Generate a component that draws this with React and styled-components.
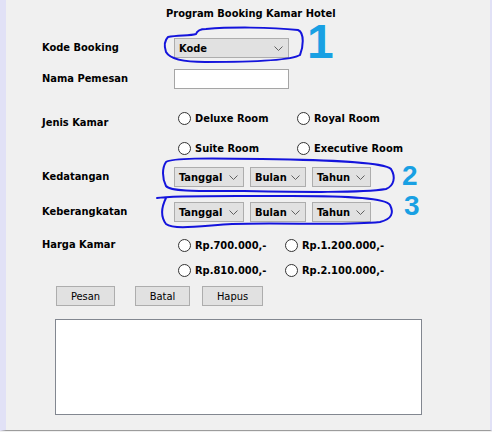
import styled, { createGlobalStyle } from "styled-components";

const GlobalStyle = createGlobalStyle`
  body {
    margin: 0;
    background: #f0f0f0;
    font-family: "DejaVu Sans Condensed", "DejaVu Sans", sans-serif;
    font-stretch: condensed;
  }
`;

const Window = styled.div`
  position: relative;
  width: 492px;
  height: 431px;
  box-sizing: border-box;
  background: #f0f0f0;
  border-left: 6px solid #e1e1f6;
  border-right: 2px solid #e1e1f6;
  border-bottom: 1px solid #9c9c9c;
`;

const Form = styled.div`
  display: flex;
  flex-direction: column;
  padding-left: 36px;
  font-size: 11px;
  font-weight: bold;
  color: #000;
`;

const Title = styled.div`
  margin-top: 7px;
  padding-left: 124px;
  line-height: 13px;
`;

const Row = styled.div`
  display: grid;
  grid-template-columns: 132px auto;
  align-items: ${(p) => p.$align || "center"};
  margin-top: ${(p) => p.$top}px;
`;

const Label = styled.div`
  line-height: 20px;
  margin-top: ${(p) => p.$offset || 0}px;
`;

const Combo = styled.div`
  width: ${(p) => p.$w}px;
  height: 20px;
  box-sizing: border-box;
  display: flex;
  align-items: center;
  justify-content: space-between;
  padding: 0 5px 0 4px;
  background: #e1e1e1;
  border: 1px solid #adadad;
`;

const ComboGroup = styled.div`
  display: flex;
  gap: 6px;
`;

const TextField = styled.div`
  width: 115px;
  height: 20px;
  box-sizing: border-box;
  background: #fff;
  border: 1px solid #a5a5a5;
`;

const RadioGrid = styled.div`
  display: grid;
  grid-template-columns: repeat(2, ${(p) => p.$col}px);
  row-gap: ${(p) => p.$gap}px;
  padding-left: 4px;
`;

const RadioItem = styled.label`
  height: 20px;
  display: flex;
  align-items: center;
  gap: 4px;
  white-space: nowrap;
`;

const Circle = styled.span`
  width: 13px;
  height: 13px;
  box-sizing: border-box;
  border-radius: 50%;
  border: 1px solid #333;
  background: #fff;
`;

const ButtonRow = styled.div`
  display: flex;
  margin-top: 6px;
  padding-left: 14px;
`;

const Button = styled.button`
  width: ${(p) => p.$w}px;
  height: 20px;
  margin-left: ${(p) => p.$ml || 0}px;
  padding: 0;
  background: #e1e1e1;
  border: 1px solid #adadad;
  font-family: inherit;
  font-stretch: condensed;
  font-size: 11px;
  font-weight: normal;
  color: #000;
`;

const TextArea = styled.div`
  width: 367px;
  height: 96px;
  box-sizing: border-box;
  margin: 13px 0 0 13px;
  background: #fff;
  border: 1px solid #828790;
`;

const Overlay = styled.svg`
  position: absolute;
  left: -6px;
  top: 0;
  pointer-events: none;
`;

const Marker = styled.span`
  position: absolute;
  left: ${(p) => p.$x - 6}px;
  top: ${(p) => p.$y}px;
  font-family: "Liberation Sans", Arial, sans-serif;
  font-weight: bold;
  font-size: ${(p) => p.$size}px;
  line-height: 1;
  color: #19a0e3;
`;

function Chevron() {
  return (
    <svg width="9" height="5" viewBox="0 0 9 5">
      <polyline points="0.5,0.5 4.5,4.5 8.5,0.5" fill="none" stroke="#606060" strokeWidth="1" />
    </svg>
  );
}

function Select({ w, children }) {
  return (
    <Combo $w={w}>
      <span>{children}</span>
      <Chevron />
    </Combo>
  );
}

function Radio({ children }) {
  return (
    <RadioItem>
      <Circle />
      {children}
    </RadioItem>
  );
}

function DateSelects() {
  return (
    <ComboGroup>
      <Select w={70}>Tanggal</Select>
      <Select w={56}>Bulan</Select>
      <Select w={59}>Tahun</Select>
    </ComboGroup>
  );
}

export default function App() {
  return (
    <>
      <GlobalStyle />
      <Window>
        <Form>
          <Title>Program Booking Kamar Hotel</Title>
          <Row $top={18}>
            <Label>Kode Booking</Label>
            <Select w={115}>Kode</Select>
          </Row>
          <Row $top={11}>
            <Label>Nama Pemesan</Label>
            <TextField />
          </Row>
          <Row $top={19} $align="start">
            <Label $offset={5}>Jenis Kamar</Label>
            <RadioGrid $col={119} $gap={10}>
              <Radio>Deluxe Room</Radio>
              <Radio>Royal Room</Radio>
              <Radio>Suite Room</Radio>
              <Radio>Executive Room</Radio>
            </RadioGrid>
          </Row>
          <Row $top={9}>
            <Label>Kedatangan</Label>
            <DateSelects />
          </Row>
          <Row $top={15}>
            <Label>Keberangkatan</Label>
            <DateSelects />
          </Row>
          <Row $top={13} $align="start">
            <Label>Harga Kamar</Label>
            <RadioGrid $col={107} $gap={5}>
              <Radio>Rp.700.000,-</Radio>
              <Radio>Rp.1.200.000,-</Radio>
              <Radio>Rp.810.000,-</Radio>
              <Radio>Rp.2.100.000,-</Radio>
            </RadioGrid>
          </Row>
          <ButtonRow>
            <Button $w={59}>Pesan</Button>
            <Button $w={55} $ml={20}>Batal</Button>
            <Button $w={61} $ml={12}>Hapus</Button>
          </ButtonRow>
          <TextArea />
        </Form>

        {/* pen marks drawn over the screenshot */}
        <Overlay width="492" height="432" viewBox="0 0 492 432">
          <g fill="none" stroke="#1414dc" strokeWidth="2" strokeLinecap="round">
            <path d="M168 37 C178 35 190 36 196 34 C197 31 200 29 206 29 C230 27 270 27 298 30 C305 33 303 48 300 55 C292 60 250 62 205 62 C185 62 170 59 166 52 C164 46 164 41 168 37" />
            <path d="M166 162 C172 158 205 158 262 159 C330 160 384 162 391 169 C396 177 394 186 386 189 C362 193 302 192 244 191 C202 191 171 192 166 186 C162 178 162 168 166 162" />
            <path d="M157 198 C172 195 232 196 292 196 C350 196 386 198 390 205 C394 213 392 219 380 222 C342 226 282 222 232 224 C200 226 174 230 166 224 C160 216 162 206 166 198" />
          </g>
        </Overlay>
        <Marker $x={307} $y={18} $size={48}>1</Marker>
        <Marker $x={402} $y={162} $size={28}>2</Marker>
        <Marker $x={404} $y={192} $size={28}>3</Marker>
      </Window>
    </>
  );
}
